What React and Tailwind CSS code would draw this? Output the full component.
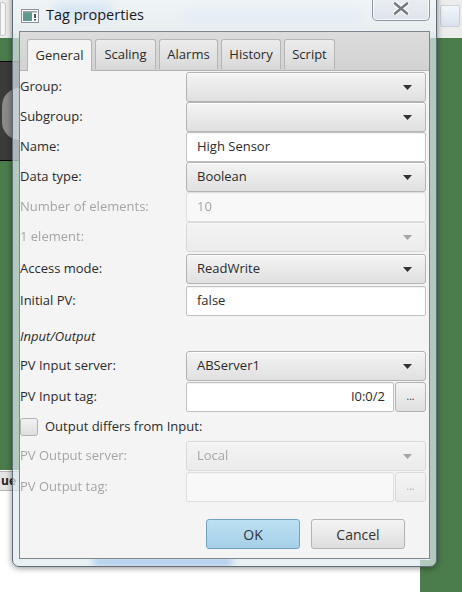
import React from "react";

const Arrow = () => (
  <svg width="9" height="5" viewBox="0 0 9 5" className="shrink-0">
    <path d="M0 0 H9 L4.5 5 Z" fill="#333" />
  </svg>
);

function Combo({ value, disabled }) {
  return (
    <div
      className={
        "flex h-full w-full items-center justify-between rounded-[3px] border border-[#b3b3b3] bg-gradient-to-b from-[#f4f4f4] to-[#e0e0e0] pl-[10px] pr-[13px] shadow-[inset_0_1px_0_#fdfdfd] " +
        (disabled ? "opacity-40" : "")
      }
    >
      <span className="text-[#2b2b2b]">{value}</span>
      <Arrow />
    </div>
  );
}

function Field({ value, disabled, right }) {
  return (
    <div
      className={
        "flex h-full w-full items-center rounded-[2px] border border-[#c2c2c2] bg-white px-[10px] shadow-[inset_0_1px_1px_rgba(0,0,0,0.06)] " +
        (right ? "justify-end pr-[8px] " : "") +
        (disabled ? "opacity-40" : "")
      }
    >
      <span className="text-[#2b2b2b]">{value}</span>
    </div>
  );
}

function Dots({ disabled }) {
  return (
    <div
      className={
        "flex h-full w-[31px] shrink-0 items-center justify-center rounded-[3px] border border-[#b3b3b3] bg-gradient-to-b from-[#f4f4f4] to-[#e0e0e0] text-[10px] leading-none text-[#333] " +
        (disabled ? "opacity-40" : "")
      }
    >
      <span className="-mt-[2px]">...</span>
    </div>
  );
}

function Row({ label, disabled, children, className = "" }) {
  return (
    <div className={"flex h-[30px] items-center " + className}>
      <div
        className={
          "w-[166px] shrink-0 text-[#2b2b2b] " + (disabled ? "opacity-40" : "")
        }
      >
        {label}
      </div>
      <div className="flex h-full w-[240px] gap-[1px]">{children}</div>
    </div>
  );
}

function Tab({ label, active, w }) {
  return (
    <div
      className={
        "flex items-center justify-center rounded-t-[3px] border border-b-0 border-[#b5b5b5] text-[#2b2b2b] " +
        (active
          ? "h-[32px] bg-[#f4f4f4] pt-[1px]"
          : "h-[30px] mb-[1px] bg-gradient-to-b from-[#ececec] to-[#d9d9d9]")
      }
      style={{ width: w }}
    >
      {label}
    </div>
  );
}

export default function App() {
  return (
    <div className="relative h-[592px] w-[462px] overflow-hidden bg-white font-['Open_Sans','Noto_Sans',sans-serif] text-[13px]">
      {/* desktop background */}
      <div className="absolute left-0 top-0 h-[38px] w-[462px] bg-[#ececec]" />
      <div className="absolute left-0 top-[2px] h-[34px] w-[6px] rounded-r-[3px] border border-[#c8c8c8] bg-[#f6f6f6]" />
      <div className="absolute left-[440px] top-[5px] h-[22px] w-[20px] rounded-[2px] border border-[#c9d2dc] bg-gradient-to-b from-[#f4f6f9] to-[#d8e2ec]" />
      <div className="absolute left-0 top-[38px] h-[432px] w-[20px] bg-[#4b7c4b]" />
      <div className="absolute left-0 top-[61px] h-[100px] w-[20px] border-y border-black bg-[#3b3b3b]" />
      <div className="absolute left-[2px] top-[88px] h-[52px] w-[18px] rounded-l-full bg-[#8a8a8a]" />
      <div className="absolute left-0 top-[471px] flex h-[20px] w-[20px] items-center border-y border-[#b5b5b5] bg-[#e4e4e4] pl-[1px] text-[12px] font-bold leading-none text-[#222]">
        ue
      </div>
      <div className="absolute left-[430px] top-[38px] h-[554px] w-[32px] bg-[#4b7c4b]" />
      <div className="absolute left-[420px] top-[560px] h-[32px] w-[42px] bg-[#4b7c4b]" />

      {/* window */}
      <div className="absolute left-[12px] top-[-10px] flex h-[577px] w-[425px] flex-col overflow-hidden rounded-[7px] border border-[#5f6d78] bg-[rgba(222,234,238,0.7)] shadow-[0_1px_6px_rgba(0,0,0,0.45)]">
        {/* glass highlights */}
        <div className="pointer-events-none absolute left-[40px] top-[12px] h-[14px] w-[60px] rounded-full bg-[#9cc4ec] opacity-60 blur-[6px]" />
        <div className="pointer-events-none absolute left-[170px] top-[18px] h-[12px] w-[180px] rounded-full bg-[#cfe2f5] opacity-70 blur-[6px]" />
        <div className="pointer-events-none absolute left-[80px] top-[568px] h-[6px] w-[140px] rounded-full bg-[#7fb0e6] opacity-70 blur-[3px]" />
        <div className="pointer-events-none absolute inset-x-0 top-0 h-[42px] bg-gradient-to-b from-[rgba(255,255,255,0.55)] to-[rgba(255,255,255,0.2)]" />

        {/* title bar */}
        <div className="relative flex h-[40px] shrink-0 items-start pl-[8px] pt-[17px]">
          <svg width="18" height="14" viewBox="0 0 18 14" className="mt-[1px] shrink-0">
            <rect x="0.5" y="0.5" width="17" height="13" fill="#f8f8f8" stroke="#8c9499" />
            <rect x="2" y="3" width="9" height="9" fill="#5e9a8e" />
            <rect x="2" y="2" width="14" height="1.5" fill="#9aa4aa" />
            <rect x="13" y="5" width="2" height="4" fill="#555" />
            <rect x="13" y="10" width="2" height="1.5" fill="#555" />
          </svg>
          <span className="ml-[7px] -mt-[1px] text-[14.5px] leading-[16px] text-[#1a1a1a]">Tag properties</span>
          <div className="absolute left-[359px] top-0 flex h-[30px] w-[58px] items-end justify-center rounded-b-[5px] border border-t-0 border-[#8d98a4] bg-gradient-to-b from-[#eef2f6] to-[#dde4ea] pb-[5px] shadow-[inset_0_0_0_1px_rgba(255,255,255,0.7)]">
            <svg width="16" height="13" viewBox="0 0 16 13">
              <path d="M2 1.5 L14 11.5 M14 1.5 L2 11.5" stroke="#fff" strokeWidth="5" strokeLinecap="round" />
              <path d="M2 1.5 L14 11.5 M14 1.5 L2 11.5" stroke="#777c82" strokeWidth="2.6" strokeLinecap="round" />
            </svg>
          </div>
        </div>

        {/* client area */}
        <div className="relative mx-[6px] flex h-[528px] flex-col border border-[#7d8790] bg-[#f4f4f4]">
          {/* tab header */}
          <div className="flex h-[39px] shrink-0 items-end gap-[3px] border-b border-[#b5b5b5] bg-gradient-to-b from-[#dcdcdc] to-[#d2d2d2] pl-[7px]">
            <div className="-mb-[1px]">
              <Tab label="General" active w={65} />
            </div>
            <Tab label="Scaling" w={61} />
            <Tab label="Alarms" w={59} />
            <Tab label="History" w={60} />
            <Tab label="Script" w={51} />
          </div>

          {/* form */}
          <div className="flex flex-col pt-[1px]">
            <Row label="Group:">
              <Combo value="" />
            </Row>
            <Row label="Subgroup:">
              <Combo value="" />
            </Row>
            <Row label="Name:">
              <Field value="High Sensor" />
            </Row>
            <Row label="Data type:">
              <Combo value="Boolean" />
            </Row>
            <Row label="Number of elements:" disabled>
              <Field value="10" disabled />
            </Row>
            <Row label="1 element:" disabled>
              <Combo value="" disabled />
            </Row>
            <Row label="Access mode:" className="mt-[2px]">
              <Combo value="ReadWrite" />
            </Row>
            <Row label="Initial PV:" className="mt-[2px]">
              <Field value="false" />
            </Row>
            <div className="mt-[6px] flex h-[29px] items-center italic text-[#2b2b2b]">
              Input/Output
            </div>
            <Row label="PV Input server:">
              <Combo value="ABServer1" />
            </Row>
            <Row label="PV Input tag:" className="mt-[1px]">
              <Field value="I0:0/2" right />
              <Dots />
            </Row>
            <div className="flex h-[29px] items-center">
              <div className="h-[18px] w-[18px] rounded-[3px] border border-[#b3b3b3] bg-gradient-to-b from-[#f2f2f2] to-[#dedede]" />
              <span className="ml-[7px] text-[#2b2b2b]">Output differs from Input:</span>
            </div>
            <Row label="PV Output server:" disabled>
              <Combo value="Local" disabled />
            </Row>
            <Row label="PV Output tag:" disabled className="mt-[1px]">
              <Field value="" disabled />
              <Dots disabled />
            </Row>
            <div className="mt-[17px] flex h-[30px] justify-end gap-[11px] pr-[24px]">
              <div className="flex h-full w-[94px] items-center justify-center rounded-[3px] border border-[#6fa3c6] bg-gradient-to-b from-[#bde0f2] to-[#a5d0e8] text-[14px] text-[#333]">
                OK
              </div>
              <div className="flex h-full w-[94px] items-center justify-center rounded-[3px] border border-[#b3b3b3] bg-gradient-to-b from-[#f4f4f4] to-[#dedede] text-[14px] text-[#333]">
                Cancel
              </div>
            </div>
          </div>
        </div>
      </div>
    </div>
  );
}
